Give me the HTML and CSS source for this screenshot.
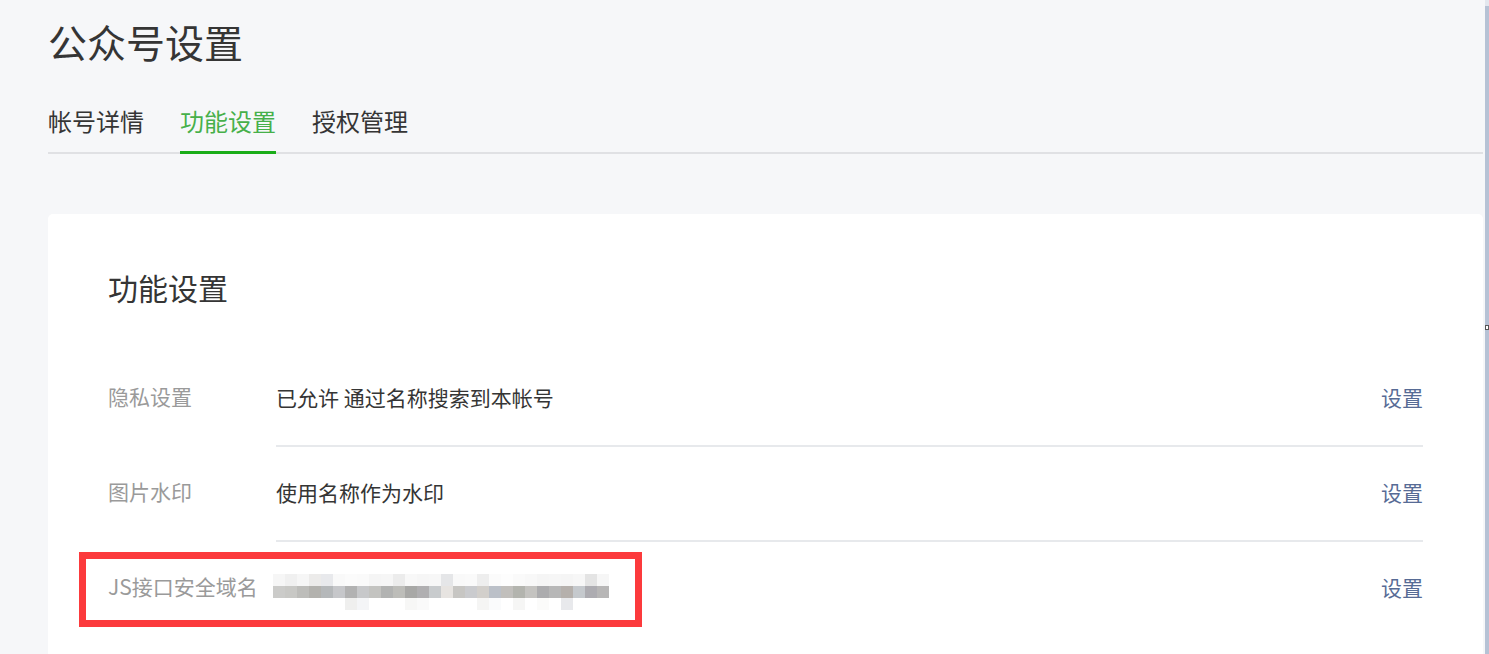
FILE: index.html
```html
<!DOCTYPE html>
<html lang="zh-CN">
<head>
<meta charset="utf-8">
<title>公众号设置</title>
<link rel="stylesheet" href="styles.css">
</head>
<body>
<div class="page">
  <h1 class="page-title">公众号设置</h1>
  <nav class="tabs">
    <a class="tab">帐号详情</a>
    <a class="tab active">功能设置</a>
    <a class="tab">授权管理</a>
  </nav>
  <section class="card">
    <h2 class="card-title">功能设置</h2>
    <div class="row">
      <div class="label">隐私设置</div>
      <div class="body">
        <span class="value">已允许 通过名称搜索到本帐号</span>
        <a class="link">设置</a>
      </div>
    </div>
    <div class="row">
      <div class="label">图片水印</div>
      <div class="body">
        <span class="value">使用名称作为水印</span>
        <a class="link">设置</a>
      </div>
    </div>
    <div class="row last">
      <div class="highlight"></div>
      <div class="label">JS接口安全域名</div>
      <div class="body">
        <span class="mosaic"><i class="m-top"></i><i class="m-mid"></i><i class="m-bot"></i></span>
        <a class="link">设置</a>
      </div>
    </div>
  </section>
</div>
<div class="scrollbar"><span class="grip"></span></div>
</body>
</html>
```

FILE: styles.css
```css
html, body {
  margin: 0;
  padding: 0;
  background: #f6f7f9;
  height: 100%;
  overflow: hidden;
}
body {
  font-family: "Noto Sans CJK SC", "Noto Sans", sans-serif;
  color: #353535;
}
.page {
  padding: 17px 6px 0 48px;
}
.page-title {
  margin: 0;
  font-size: 39px;
  line-height: 48px;
  font-weight: 400;
  color: #353535;
}
.tabs {
  display: flex;
  gap: 36px;
  margin-top: 38px;
  border-bottom: 2px solid #e0e1e4;
}
.tab {
  font-size: 24px;
  line-height: 36px;
  padding-bottom: 12px;
  margin-bottom: -2px;
  border-bottom: 3px solid transparent;
  color: #353535;
}
.tab.active {
  color: #46b04a;
  border-bottom-color: #1aad19;
}
.card {
  margin-top: 60px;
  background: #fff;
  border-radius: 5px;
  padding: 53px 60px 40px 60px;
}
.card-title {
  margin: 0 0 45px 0;
  font-size: 30px;
  line-height: 40px;
  font-weight: 400;
  color: #353535;
}
.row {
  display: flex;
  position: relative;
  font-size: 21px;
}
.label {
  width: 168px;
  flex: none;
  line-height: 89px;
  padding-bottom: 4px;
  color: #9a9a9a;
  white-space: nowrap;
}
.body {
  flex: 1;
  display: flex;
  justify-content: space-between;
  align-items: center;
  height: 89px;
  padding-bottom: 4px;
  border-bottom: 2px solid #e7e9ec;
}
.row.last .body {
  border-bottom-color: transparent;
}
.value {
  color: #353535;
}
.link {
  color: #576b95;
}
.highlight {
  position: absolute;
  left: -29px;
  top: 10px;
  width: 549px;
  height: 61px;
  border: 7px solid #fc3a3c;
}
.mosaic {
  display: flex;
  flex-direction: column;
  width: 336px;
  margin-left: -3px;
  margin-top: 11px;
}
.mosaic i {
  display: block;
  height: 12px;
}
.m-top {
  background: linear-gradient(to right,
    #f6f6f6 0 12px, #f0f0f0 12px 24px, #f6f6f6 24px 36px, #ecebea 36px 48px,
    #e8e9ec 48px 60px, #f9f9f9 60px 72px, #fbfbfb 72px 84px, #fafafa 84px 96px,
    #f5f5f5 96px 108px, #f6f6f6 108px 120px, #ececec 120px 132px, #f8f8f8 132px 144px,
    #f6f6f6 144px 156px, #f7f7f7 156px 168px, #e5e6e8 168px 180px, #f9f9f9 180px 192px,
    #fafafa 192px 204px, #eeeeee 204px 216px, #fbfbfb 216px 228px, #fdfdfd 228px 240px,
    #fafafa 240px 252px, #f8f8f8 252px 264px, #f5f5f5 264px 276px, #f6f6f6 276px 288px,
    #f5f5f5 288px 300px, #f7f7f7 300px 312px, #e4e4e4 312px 324px, #f6f6f6 324px 336px);
}
.m-mid {
  background: linear-gradient(to right,
    #cbcbc9 0 12px, #c8c8c5 12px 24px, #bdbdba 24px 36px, #b3b2ae 36px 48px,
    #b5b8ba 48px 60px, #c6c7ca 60px 72px, #b2b2b2 72px 84px, #c7c8ca 84px 96px,
    #c3c3c0 96px 108px, #b2b3b2 108px 120px, #bdbdb9 120px 132px, #a8a8a6 132px 144px,
    #b0afb1 144px 156px, #c8cbcd 156px 168px, #e7e4e1 168px 180px, #c7c6c3 180px 192px,
    #cacbce 192px 204px, #d2cfcb 204px 216px, #bbc0c8 216px 228px, #c1bfbc 228px 240px,
    #b3b4ae 240px 252px, #c4c3c0 252px 264px, #acacae 264px 276px, #b7b7b7 276px 288px,
    #b5b0ac 288px 300px, #c5c9cd 300px 312px, #adacb1 312px 324px, #b7b6b6 324px 336px);
}
.m-bot {
  background: linear-gradient(to right,
    #fff 0 72px, #efefee 72px 84px, #f4f5f7 84px 96px, #fff 96px 132px,
    #f7f7f6 132px 144px, #fafafa 144px 156px, #fff 156px 204px, #f5f5f4 204px 216px,
    #fafbfc 216px 228px, #fff 228px 240px, #f6f6f5 240px 252px, #fff 252px 264px,
    #fbfbfa 264px 276px, #fff 276px 288px, #e8e9ec 288px 300px, #fff 300px 336px);
}
.scrollbar {
  position: fixed;
  top: 0;
  right: 0;
  width: 4px;
  height: 100%;
  background: linear-gradient(to bottom, #e3e7ee 0 6px, #b6c2d5 6px);
}
.grip {
  position: absolute;
  left: 0;
  top: 325px;
  width: 2px;
  height: 3px;
  border: 1px solid #555;
  background: #fff;
}
```
